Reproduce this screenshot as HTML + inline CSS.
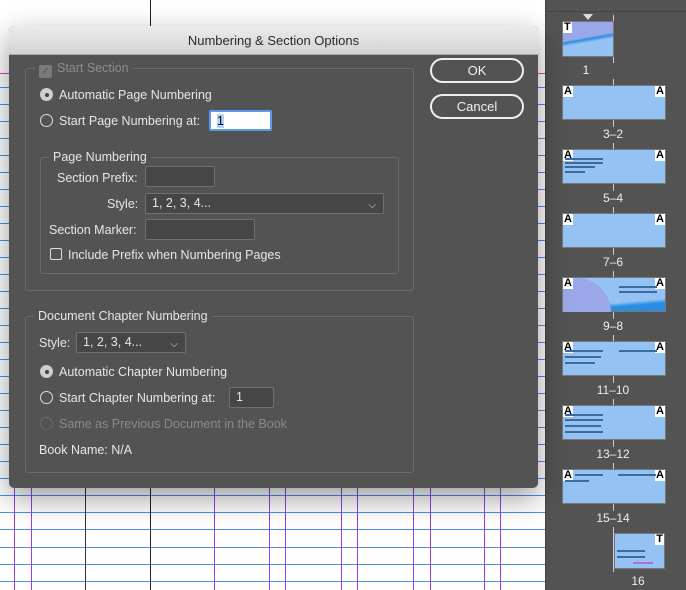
<!DOCTYPE html>
<html><head><meta charset="utf-8"><style>
*{margin:0;padding:0;box-sizing:border-box}
body{width:686px;height:590px;overflow:hidden;position:relative;background:#fff;font-family:"Liberation Sans",sans-serif;font-size:12.5px;color:#e6e6e6}
.a{position:absolute}
.h{position:absolute;left:0;width:545px;height:1px;background:#4a8ef0}
.v{position:absolute;top:60px;height:530px;width:1px;background:#9a3cf0}
.dlg{left:9px;top:26px;width:529px;height:462px;background:#535353;border-radius:5px;box-shadow:0 10px 30px rgba(0,0,0,.4);overflow:hidden}
.tb{left:0;top:0;width:529px;height:29px;background:linear-gradient(#ececec,#d3d3d3);color:#2a2a2a;font-size:13px;text-align:center;line-height:29px;border-bottom:1px solid #aaa}
.box{position:absolute;border:1px solid #6b6b6b;border-radius:3px}
.lg{position:absolute;background:#535353;padding:0 4px;line-height:14px}
.t{position:absolute;line-height:14px;white-space:nowrap}
.rad{position:absolute;width:13px;height:13px;border-radius:50%;border:1.3px solid #ddd}
.rad.on{background:#cfcfcf;border-color:#cfcfcf}
.rad.on:after{content:"";position:absolute;left:3.5px;top:3.5px;width:4px;height:4px;border-radius:50%;background:#444}
.inp{position:absolute;background:#464646;border:1px solid #707070;border-radius:2px;line-height:18px;padding-left:6px}
.btn{position:absolute;border:2px solid #eee;border-radius:13px;text-align:center;line-height:21px;font-size:13px;color:#f0f0f0}
.chev{position:absolute;right:7px;top:3px;font-size:10px;color:#ddd}
.th{position:absolute;background:#94c3f3;border:1px solid #777}
.A{position:absolute;top:0;background:#fff;color:#000;font-weight:bold;font-size:11px;line-height:11px;padding:0 1px}
.lbl{position:absolute;color:#eee;font-size:12px;text-align:center;width:60px}
.sp{position:absolute;left:613px;width:1px;background:#ccc}
.bar{position:absolute;height:2px;background:#3c6ba0}
</style></head><body>
<div class="h" style="top:73px;background:#e040c0"></div>
<div class="h" style="top:87px"></div><div class="h" style="top:104px"></div><div class="h" style="top:121px"></div><div class="h" style="top:138px"></div><div class="h" style="top:155px"></div><div class="h" style="top:172px"></div><div class="h" style="top:189px"></div><div class="h" style="top:206px"></div><div class="h" style="top:223px"></div><div class="h" style="top:240px"></div><div class="h" style="top:257px"></div><div class="h" style="top:274px"></div><div class="h" style="top:291px"></div><div class="h" style="top:308px"></div><div class="h" style="top:325px"></div><div class="h" style="top:342px"></div><div class="h" style="top:359px"></div><div class="h" style="top:376px"></div><div class="h" style="top:393px"></div><div class="h" style="top:410px"></div><div class="h" style="top:427px"></div><div class="h" style="top:444px"></div><div class="h" style="top:461px"></div><div class="h" style="top:478px"></div><div class="h" style="top:495px"></div><div class="h" style="top:512px"></div><div class="h" style="top:529px"></div><div class="h" style="top:547px"></div><div class="h" style="top:564px"></div><div class="h" style="top:581px"></div>
<div class="v" style="left:14px"></div><div class="v" style="left:31px"></div><div class="v" style="left:85px;background:#333"></div><div class="v" style="left:150px;background:#222;top:0;height:590px"></div><div class="v" style="left:214px"></div><div class="v" style="left:269px"></div><div class="v" style="left:285px"></div><div class="v" style="left:341px"></div><div class="v" style="left:357px"></div><div class="v" style="left:413px"></div><div class="v" style="left:430px"></div><div class="v" style="left:484px"></div><div class="v" style="left:500px"></div>
<div class="a" style="left:545px;top:0;width:141px;height:590px;background:#535353;border-left:1px solid #444"></div>
<div class="a" style="left:545px;top:11px;width:141px;height:1px;background:#444"></div>
<div class="a" style="left:583px;top:14px;width:0;height:0;border-left:5px solid transparent;border-right:5px solid transparent;border-top:6px solid #ddd"></div>
<div class="sp" style="top:15px;height:48px"></div>
<div class="th" style="left:562px;top:21px;width:52px;height:36px;background:linear-gradient(170deg,#9aa8ea 45%,#2a8ee0 50%,#94c3f3 58%)"><div class="A" style="left:0">T</div></div>
<div class="lbl" style="left:556px;top:63px">1</div>
<div class="sp" style="top:79px;height:48px"></div>
<div class="th" style="left:562px;top:85px;width:104px;height:35px"><div class="A" style="left:0">A</div><div class="A" style="right:0">A</div></div>
<div class="lbl" style="left:583px;top:127px">3–2</div>
<div class="sp" style="top:143px;height:48px"></div>
<div class="th" style="left:562px;top:149px;width:104px;height:35px"><div class="A" style="left:0">A</div><div class="A" style="right:0">A</div><div class="bar" style="left:2px;top:8px;width:38px"></div><div class="bar" style="left:2px;top:12px;width:38px"></div><div class="bar" style="left:2px;top:16px;width:30px"></div><div class="bar" style="left:2px;top:21px;width:20px"></div></div>
<div class="lbl" style="left:583px;top:191px">5–4</div>
<div class="sp" style="top:207px;height:48px"></div>
<div class="th" style="left:562px;top:213px;width:104px;height:35px"><div class="A" style="left:0">A</div><div class="A" style="right:0">A</div></div>
<div class="lbl" style="left:583px;top:255px">7–6</div>
<div class="sp" style="top:271px;height:48px"></div>
<div class="th" style="left:562px;top:277px;width:104px;height:35px;background:linear-gradient(175deg,#94c3f3 70%,#2a8ee0 80%)"><div class="a" style="left:0;top:0;width:48px;height:34px;background:#9aa8ea;border-radius:0 40px 0 0"></div><div class="A" style="left:0">A</div><div class="A" style="right:0">A</div><div class="bar" style="left:56px;top:8px;width:38px"></div><div class="bar" style="left:56px;top:13px;width:38px"></div></div>
<div class="lbl" style="left:583px;top:319px">9–8</div>
<div class="sp" style="top:335px;height:48px"></div>
<div class="th" style="left:562px;top:341px;width:104px;height:35px"><div class="A" style="left:0">A</div><div class="A" style="right:0">A</div><div class="bar" style="left:2px;top:8px;width:38px"></div><div class="bar" style="left:2px;top:14px;width:36px"></div><div class="bar" style="left:2px;top:20px;width:30px"></div><div class="bar" style="left:56px;top:8px;width:38px"></div></div>
<div class="lbl" style="left:583px;top:383px">11–10</div>
<div class="sp" style="top:399px;height:48px"></div>
<div class="th" style="left:562px;top:405px;width:104px;height:35px"><div class="A" style="left:0">A</div><div class="A" style="right:0">A</div><div class="bar" style="left:2px;top:8px;width:38px"></div><div class="bar" style="left:2px;top:13px;width:38px"></div><div class="bar" style="left:2px;top:19px;width:36px"></div><div class="bar" style="left:2px;top:25px;width:38px"></div></div>
<div class="lbl" style="left:583px;top:447px">13–12</div>
<div class="sp" style="top:463px;height:48px"></div>
<div class="th" style="left:562px;top:469px;width:104px;height:35px"><div class="A" style="left:0">A</div><div class="A" style="right:0">A</div><div class="bar" style="left:12px;top:4px;width:28px"></div><div class="bar" style="left:55px;top:4px;width:38px"></div><div class="bar" style="left:2px;top:10px;width:24px"></div></div>
<div class="lbl" style="left:583px;top:511px">15–14</div>
<div class="sp" style="top:527px;height:45px"></div>
<div class="th" style="left:614px;top:533px;width:51px;height:36px"><div class="A" style="right:0">T</div><div class="bar" style="left:2px;top:16px;width:28px"></div><div class="bar" style="left:2px;top:22px;width:28px"></div><div class="bar" style="left:18px;top:28px;width:20px;background:#b070d0"></div></div>
<div class="lbl" style="left:608px;top:574px">16</div>
<div class="a dlg">
<div class="a tb">Numbering &amp; Section Options</div>
<div class="box" style="left:16px;top:42px;width:389px;height:223px"></div>
<div class="lg" style="left:26px;top:35px;color:#8c8c8c"><span style="display:inline-block;width:13px;height:13px;background:#7a7a7a;border-radius:2px;vertical-align:-2px;margin-right:5px;color:#555;font-size:10px;line-height:13px;text-align:center">✓</span>Start Section</div>
<div class="rad on" style="left:31px;top:62px"></div><div class="t" style="left:50px;top:62px">Automatic Page Numbering</div>
<div class="rad" style="left:31px;top:88px"></div><div class="t" style="left:50px;top:88px">Start Page Numbering at:</div>
<div class="inp" style="left:200px;top:84px;width:63px;height:21px;background:#fff;border:2px solid #5a9bf0;color:#000"><span style="background:#b5d3f8">1</span></div>
<div class="btn" style="left:421px;top:32px;width:94px;height:25px">OK</div>
<div class="btn" style="left:421px;top:68px;width:94px;height:25px">Cancel</div>
<div class="box" style="left:31px;top:131px;width:359px;height:117px"></div>
<div class="lg" style="left:40px;top:124px">Page Numbering</div>
<div class="t" style="left:48px;top:145px">Section Prefix:</div>
<div class="inp" style="left:136px;top:140px;width:70px;height:21px"></div>
<div class="t" style="left:98px;top:171px">Style:</div>
<div class="inp" style="left:136px;top:167px;width:239px;height:21px">1, 2, 3, 4...<span class="chev">⌵</span></div>
<div class="t" style="left:40px;top:197px">Section Marker:</div>
<div class="inp" style="left:136px;top:193px;width:110px;height:21px"></div>
<div class="a" style="left:41px;top:222px;width:12px;height:12px;border:1.3px solid #ddd;border-radius:2px"></div><div class="t" style="left:59px;top:222px">Include Prefix when Numbering Pages</div>
<div class="box" style="left:16px;top:290px;width:389px;height:157px"></div>
<div class="lg" style="left:25px;top:283px">Document Chapter Numbering</div>
<div class="t" style="left:30px;top:310px">Style:</div>
<div class="inp" style="left:67px;top:306px;width:110px;height:21px">1, 2, 3, 4...<span class="chev">⌵</span></div>
<div class="rad on" style="left:31px;top:339px"></div><div class="t" style="left:50px;top:339px">Automatic Chapter Numbering</div>
<div class="rad" style="left:31px;top:365px"></div><div class="t" style="left:50px;top:365px">Start Chapter Numbering at:</div>
<div class="inp" style="left:220px;top:361px;width:45px;height:21px">1</div>
<div class="rad" style="left:31px;top:391px;border-color:#6a6a6a"></div><div class="t" style="left:50px;top:391px;color:#8a8a8a">Same as Previous Document in the Book</div>
<div class="t" style="left:30px;top:417px">Book Name: N/A</div>
</div>
</body></html>
